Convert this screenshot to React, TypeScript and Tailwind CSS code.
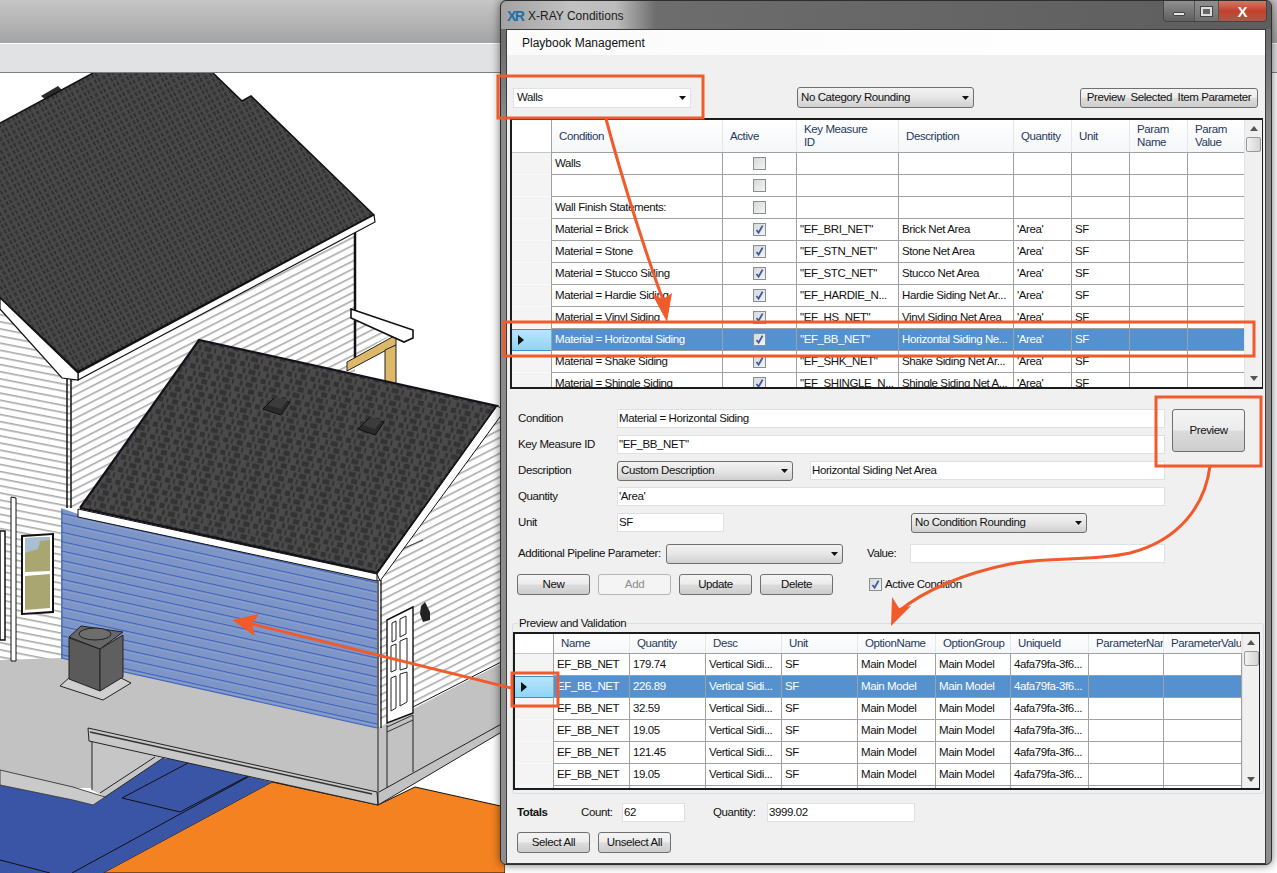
const FONT = "font-['Liberation_Sans',Arial,sans-serif]";

const conditionCols = [171, 74, 102, 115, 58, 58, 58, 57];
const previewCols = [76, 76, 76, 76, 78, 75, 78, 75, 78];

const conditionRows = [
  ["Walls", "off", "", "", "", ""],
  ["", "off", "", "", "", ""],
  ["Wall Finish Statements:", "off", "", "", "", ""],
  ["Material = Brick", "on", '"EF_BRI_NET"', "Brick Net Area", "'Area'", "SF"],
  ["Material = Stone", "on", '"EF_STN_NET"', "Stone Net Area", "'Area'", "SF"],
  ["Material = Stucco Siding", "on", '"EF_STC_NET"', "Stucco Net Area", "'Area'", "SF"],
  ["Material = Hardie Siding", "on", '"EF_HARDIE_N...', "Hardie Siding Net Ar...", "'Area'", "SF"],
  ["Material = Vinyl Siding", "on", '"EF_HS_NET"', "Vinyl Siding Net Area", "'Area'", "SF"],
  ["Material = Horizontal Siding", "on", '"EF_BB_NET"', "Horizontal Siding Ne...", "'Area'", "SF"],
  ["Material = Shake Siding", "on", '"EF_SHK_NET"', "Shake Siding Net Ar...", "'Area'", "SF"],
  ["Material = Shingle Siding", "on", '"EF_SHINGLE_N...', "Shingle Siding Net A...", "'Area'", "SF"],
];

const previewQty = ["179.74", "226.89", "32.59", "19.05", "121.45", "19.05", ""];

function Check({ on }: { on: boolean }) {
  return (
    <span className="flex h-[13px] w-[13px] items-center justify-center border border-[#8a8f94] bg-gradient-to-br from-[#d8d8d8] to-[#f4f4f4]">
      {on && (
        <svg width="11" height="11" viewBox="0 0 11 11">
          <path d="M2.5 6 L4.6 8.6 L8.6 1.6" fill="none" stroke="#3a5ca8" strokeWidth="1.9" />
        </svg>
      )}
    </span>
  );
}

function Caret() {
  return (
    <svg width="7" height="4" viewBox="0 0 7 4" className="shrink-0">
      <path d="M0 0 H7 L3.5 4 Z" fill="#111" />
    </svg>
  );
}

function Combo({ text, className, plain }: { text: string; className: string; plain?: boolean }) {
  return (
    <div
      className={`flex shrink-0 items-center justify-between pl-[3px] pr-[4px] ${className} ${
        plain
          ? "border border-[#dfe3e8] bg-white"
          : "rounded-[3px] border border-[#6f6f6f] bg-gradient-to-b from-[#f3f3f3] via-[#e6e6e6] to-[#cfcfcf]"
      }`}
    >
      <span>{text}</span>
      <Caret />
    </div>
  );
}

function Field({ text, className }: { text: string; className: string }) {
  return (
    <div className={`flex shrink-0 items-center border border-[#dde1e6] bg-white pl-[1px] ${className}`}>
      {text}
    </div>
  );
}

function Btn({ text, className, disabled }: { text: string; className: string; disabled?: boolean }) {
  return (
    <div
      className={`flex shrink-0 items-center justify-center rounded-[3px] border ${className} ${
        disabled
          ? "border-[#b5b5b5] bg-[#f4f4f4] text-[#8d8d8d]"
          : "border-[#6f6f6f] bg-[linear-gradient(180deg,#f4f4f4_0%,#ececec_48%,#dcdcdc_52%,#cdcdcd_100%)]"
      }`}
    >
      {text}
    </div>
  );
}

function Scrollbar({ width }: { width: string }) {
  return (
    <div className={`flex shrink-0 flex-col items-center border-l border-[#e3e3e3] bg-[#f0f0f0] ${width}`}>
      <svg width="8" height="5" viewBox="0 0 8 5" className="mt-[6px]">
        <path d="M0 5 H8 L4 0 Z" fill="#555" />
      </svg>
      <div className="mt-[6px] h-[15px] w-[15px] rounded-[2px] border border-[#9a9a9a] bg-gradient-to-r from-[#f2f2f2] to-[#d4d4d4]" />
      <svg width="8" height="5" viewBox="0 0 8 5" className="mb-[6px] mt-auto">
        <path d="M0 0 H8 L4 5 Z" fill="#555" />
      </svg>
    </div>
  );
}

function RowHead({ selected }: { selected: boolean }) {
  return (
    <div
      className={`flex h-[22px] shrink-0 items-center pl-[6px] ${
        selected
          ? "border-y border-[#3b93bd] bg-gradient-to-b from-[#b8e6fb] to-[#8fd4f6]"
          : "border-b border-[#fafafa] bg-[#f4f4f4]"
      }`}
    >
      {selected && (
        <svg width="6" height="10" viewBox="0 0 6 10">
          <path d="M0 0 L6 5 L0 10 Z" fill="#111" />
        </svg>
      )}
    </div>
  );
}

function ConditionGrid() {
  return (
    <div className="ml-[3px] mt-[10px] flex h-[271px] w-[753px] border-2 border-[#1c1c1c] border-r-[1px] bg-white">
      <div className="w-[40px] shrink-0 overflow-hidden border-r border-[#a0a0a0]">
        <div className="h-[33px] border-b border-[#c8c8c8]" />
        {conditionRows.map((r, i) => (
          <RowHead key={i} selected={i === 8} />
        ))}
      </div>
      <div className="min-w-0 flex-1 overflow-hidden">
        <div className="flex h-[33px] border-b border-[#a0a0a0] bg-gradient-to-b from-white to-[#f4f6f8] leading-[13px] text-[#1e395b]">
          {["Condition", "Active", "Key Measure\nID", "Description", "Quantity", "Unit", "Param\nName", "Param\nValue"].map(
            (h, i) => (
              <div
                key={h}
                style={{ width: conditionCols[i] }}
                className="flex shrink-0 items-center whitespace-pre-line border-r border-[#e4e7eb] pl-[7px]"
              >
                {h}
              </div>
            )
          )}
        </div>
        {conditionRows.map((r, i) => {
          const sel = i === 8;
          return (
            <div
              key={i}
              className={`flex h-[22px] border-b border-[#a0a0a0] ${sel ? "bg-[#5591cf] text-white" : ""}`}
            >
              <div style={{ width: conditionCols[0] }} className="flex shrink-0 items-center whitespace-nowrap border-r border-[#a0a0a0] pl-[3px]">
                {r[0]}
              </div>
              <div style={{ width: conditionCols[1] }} className="flex shrink-0 items-center justify-center border-r border-[#a0a0a0]">
                <Check on={r[1] === "on"} />
              </div>
              {[2, 3, 4, 5, 6, 7].map((c) => (
                <div
                  key={c}
                  style={{ width: conditionCols[c] }}
                  className="flex shrink-0 items-center overflow-hidden whitespace-nowrap border-r border-[#a0a0a0] pl-[3px]"
                >
                  {r[c] ?? ""}
                </div>
              ))}
            </div>
          );
        })}
      </div>
      <Scrollbar width="w-[18px]" />
    </div>
  );
}

function PreviewGrid() {
  return (
    <div className="flex h-[158px] w-[747px] border-2 border-[#1c1c1c] border-r-[1px] bg-white">
      <div className="w-[39px] shrink-0 overflow-hidden border-r border-[#a0a0a0]">
        <div className="h-[20px] border-b border-[#c8c8c8]" />
        {previewQty.map((q, i) => (
          <RowHead key={i} selected={i === 1} />
        ))}
      </div>
      <div className="min-w-0 flex-1 overflow-hidden">
        <div className="flex h-[20px] border-b border-[#a0a0a0] bg-gradient-to-b from-white to-[#f4f6f8] text-[#1e395b]">
          {["Name", "Quantity", "Desc", "Unit", "OptionName", "OptionGroup", "UniqueId", "ParameterName", "ParameterValue"].map(
            (h, i) => (
              <div
                key={h}
                style={{ width: previewCols[i] }}
                className="flex shrink-0 items-center overflow-hidden whitespace-nowrap border-r border-[#e4e7eb] pl-[7px]"
              >
                {h}
              </div>
            )
          )}
        </div>
        {previewQty.map((q, i) => {
          const full = q !== "";
          const cells = full
            ? ["EF_BB_NET", q, "Vertical Sidi...", "SF", "Main Model", "Main Model", "4afa79fa-3f6...", "", ""]
            : ["", "", "", "", "", "", "", "", ""];
          return (
            <div
              key={i}
              className={`flex h-[22px] border-b border-[#a0a0a0] ${i === 1 ? "bg-[#5591cf] text-white" : ""}`}
            >
              {cells.map((c, j) => (
                <div
                  key={j}
                  style={{ width: previewCols[j] }}
                  className="flex shrink-0 items-center overflow-hidden whitespace-nowrap border-r border-[#a0a0a0] pl-[3px]"
                >
                  {c}
                </div>
              ))}
            </div>
          );
        })}
      </div>
      <Scrollbar width="w-[17px]" />
    </div>
  );
}

function ConditionsWindow() {
  return (
    <div className={`absolute left-[500px] top-0 flex h-[865px] w-[772px] flex-col rounded-[6px] border border-[#2e2e2e] bg-[linear-gradient(180deg,#6a6a6a_0px,#6e6e6e_40px,#8a8a8a_120px,#8d8d8d_100%)] text-[#111] shadow-[0_0_10px_rgba(0,0,0,0.55)] ${FONT}`}>
      <div className="flex h-[28px] shrink-0 rounded-t-[6px] bg-[linear-gradient(90deg,#a2a2a2_0px,#c2c2c2_70px,#bcbcbc_115px,#6d6d6d_155px,#5d5d5d_100%)]">
        <div className="flex items-center pl-[6px] pt-[2px]">
          <span className="w-[21px] text-[14px] font-bold tracking-[-1.5px] text-[#1f6fa6]">XR</span>
          <span className="text-[12px] text-[#1b1b1b]">X-RAY Conditions</span>
        </div>
        <div className="ml-auto mr-[4px] flex h-[21px] overflow-hidden rounded-b-[4px] border border-t-0 border-[#444]">
          <div className="flex w-[30px] items-end justify-center bg-gradient-to-b from-[#8f8f8f] to-[#5f5f5f] pb-[5px]">
            <div className="h-[4px] w-[12px] rounded-[1px] border border-[#444] bg-[#e8e8e8]" />
          </div>
          <div className="flex w-[25px] items-center justify-center border-x border-[#555] bg-gradient-to-b from-[#8f8f8f] to-[#6f6f6f]">
            <div className="h-[9px] w-[11px] border-2 border-[#ddd] bg-[#666] outline outline-1 outline-[#444]" />
          </div>
          <div className="flex w-[47px] items-center justify-center bg-gradient-to-b from-[#d07868] via-[#c3402a] to-[#a8584a] text-[15px] font-bold leading-none text-white">
            X
          </div>
        </div>
      </div>

      <div className="mx-[5px] flex flex-1 flex-col border border-[#3a3a3a] bg-[#f0f0f0] text-[11.5px] tracking-[-0.4px]">
        <div className="flex h-[25px] shrink-0 items-center bg-gradient-to-r from-[#fbfbfb] to-white pl-[15px] text-[12px] tracking-normal">
          Playbook Management
        </div>

        <div className="mt-[32px] flex h-[21px] shrink-0 items-center pl-[6px]">
          <Combo plain text="Walls" className="h-[20px] w-[178px]" />
          <Combo text="No Category Rounding" className="ml-[106px] h-[21px] w-[177px]" />
          <Btn text="Preview  Selected  Item Parameter" className="ml-[106px] h-[20px] w-[178px] whitespace-pre" />
        </div>

        <ConditionGrid />

        <div className="mt-[20px] flex pl-[11px]">
          <div className="flex w-[647px] shrink-0 flex-col">
            <div className="flex h-[19px] items-center">
              <span className="w-[99px]">Condition</span>
              <Field text="Material = Horizontal Siding" className="h-[19px] w-[548px]" />
            </div>
            <div className="mt-[7px] flex h-[19px] items-center">
              <span className="w-[99px]">Key Measure ID</span>
              <Field text={'"EF_BB_NET"'} className="h-[19px] w-[548px]" />
            </div>
            <div className="mt-[7px] flex h-[19px] items-center">
              <span className="w-[99px]">Description</span>
              <Combo text="Custom Description" className="h-[20px] w-[176px]" />
              <Field text="Horizontal Siding Net Area" className="ml-[17px] h-[19px] w-[355px]" />
            </div>
            <div className="mt-[7px] flex h-[19px] items-center">
              <span className="w-[99px]">Quantity</span>
              <Field text="'Area'" className="h-[19px] w-[548px]" />
            </div>
            <div className="mt-[7px] flex h-[19px] items-center">
              <span className="w-[99px]">Unit</span>
              <Field text="SF" className="h-[19px] w-[107px]" />
              <Combo text="No Condition Rounding" className="ml-[187px] h-[20px] w-[176px]" />
            </div>
            <div className="mt-[12px] flex h-[19px] items-center">
              <span className="w-[148px] whitespace-nowrap">Additional Pipeline Parameter:</span>
              <Combo text="" className="h-[20px] w-[177px]" />
              <span className="ml-[24px] w-[43px]">Value:</span>
              <Field text="" className="h-[19px] w-[255px]" />
            </div>
            <div className="-ml-[1px] mt-[11px] flex h-[21px] items-center">
              <Btn text="New" className="h-[21px] w-[73px]" />
              <Btn text="Add" disabled className="ml-[8px] h-[21px] w-[73px]" />
              <Btn text="Update" className="ml-[8px] h-[21px] w-[73px]" />
              <Btn text="Delete" className="ml-[8px] h-[21px] w-[73px]" />
              <span className="ml-[36px] flex items-center gap-[3px]">
                <Check on />
                Active Condition
              </span>
            </div>
          </div>
          <Btn text="Preview" className="ml-[7px] h-[43px] w-[73px]" />
        </div>

        <div className="relative ml-[5px] mt-[28px] h-[171px] w-[752px] shrink-0 rounded-[3px] border border-[#d5dfe5] pt-[8px]">
          <span className="absolute left-[5px] top-[-7px] bg-[#f0f0f0] px-[1px] leading-[13px]">
            Preview and Validation
          </span>
          <PreviewGrid />
        </div>

        <div className="mt-[9px] flex h-[19px] shrink-0 items-center pl-[10px]">
          <span className="w-[64px] font-bold">Totals</span>
          <span className="w-[41px]">Count:</span>
          <Field text="62" className="h-[19px] w-[63px]" />
          <span className="ml-[28px] w-[54px]">Quantity:</span>
          <Field text="3999.02" className="h-[19px] w-[148px]" />
        </div>
        <div className="mt-[10px] flex h-[21px] shrink-0 gap-[8px] pl-[10px]">
          <Btn text="Select All" className="h-[21px] w-[73px]" />
          <Btn text="Unselect All" className="h-[21px] w-[73px]" />
        </div>
      </div>
    </div>
  );
}

function House() {
  return (
    <svg viewBox="0 73 505 800" className="block h-[800px] w-[505px]">
      <defs>
        <pattern id="roofA" width="15" height="6" patternUnits="userSpaceOnUse" patternTransform="rotate(-28)">
          <rect width="15" height="6" fill="#484848" />
          <rect x="0" y="1" width="2" height="4" fill="#303030" />
          <rect x="4" y="1" width="2" height="4" fill="#303030" />
          <rect x="9" y="1" width="3" height="4" fill="#353535" />
        </pattern>
        <pattern id="roofB" width="24" height="13" patternUnits="userSpaceOnUse" patternTransform="rotate(12.5)">
          <rect width="24" height="13" fill="#4a4a4a" />
          <rect x="1" y="1" width="5" height="5" fill="#333333" />
          <rect x="9" y="1" width="2" height="5" fill="#333333" />
          <rect x="15" y="1" width="6" height="5" fill="#333333" />
          <rect x="5" y="7.5" width="3" height="5" fill="#333333" />
          <rect x="11" y="7.5" width="7" height="5" fill="#333333" />
          <rect x="21" y="7.5" width="2" height="5" fill="#333333" />
        </pattern>
        <pattern id="sidingR" width="20" height="7" patternUnits="userSpaceOnUse" patternTransform="rotate(-27)">
          <rect width="20" height="7" fill="#ffffff" />
          <rect width="20" height="1.6" fill="#a9a9a9" />
        </pattern>
        <pattern id="sidingL" width="20" height="7" patternUnits="userSpaceOnUse" patternTransform="rotate(11)">
          <rect width="20" height="7" fill="#ffffff" />
          <rect width="20" height="1.6" fill="#a9a9a9" />
        </pattern>
        <pattern id="sidingBlue" width="20" height="9.2" patternUnits="userSpaceOnUse" patternTransform="rotate(12.4)">
          <rect width="20" height="9.2" fill="#7e95c7" />
          <rect y="0" width="20" height="1.4" fill="#3f63bd" />
          <rect y="1.4" width="20" height="1.4" fill="#8ea2cc" />
        </pattern>
      </defs>

      <rect x="0" y="73" width="505" height="800" fill="#ffffff" />

      {/* ground */}
      <polygon points="415,787 505,742 505,807" fill="#ffffff" />
      <polygon points="272,782 378,805 415,787 505,807 505,873 103,873" fill="#f58220" stroke="#111" strokeWidth="1" />
      <polygon points="0,785 73,800 93,805 105,797 163,758 177,760 272,782 103,873 0,873" fill="#3a55a5" />
      <path d="M122,798 L188,763 M122,798 L180,812 L250,775 M72,873 L248,777 M0,860 L50,873" fill="none" stroke="#111" strokeWidth="1" />

      {/* slab */}
      <polygon points="0,658 61,658 378,728 505,660 505,730 378,805 92,741 92,788 73,788 0,770" fill="#c2c2c2" />
      <polygon points="92,741 163,758 105,797 92,790" fill="#c6c6c6" />
      <polygon points="0,770 73,787 105,797 93,805 73,800 0,785" fill="#cacaca" stroke="#222" strokeWidth="0.8" />
      <path d="M92,741 V790 M105,797 L163,758 M100,793 L155,757" fill="none" stroke="#222" strokeWidth="1" />
      <polygon points="88,728 377,792 378,805 89,741" fill="#c8c8c8" stroke="#222" strokeWidth="1" />
      <path d="M90,732 L372,794" stroke="#333" strokeWidth="1.5" />
      <path d="M378,728 V805 M387,725 V788 M413,715 V772 M378,805 L505,730 M379,792 L505,722" fill="none" stroke="#222" strokeWidth="1" />

      {/* upper walls */}
      <polygon points="0,300 70,378 70,510 0,495" fill="url(#sidingL)" />
      <polygon points="70,378 355,232 355,420 70,510" fill="url(#sidingR)" />
      <polygon points="355,318 395,333 356,356" fill="url(#sidingR)" />
      <path d="M355,232 V360" stroke="#111" strokeWidth="2.5" />
      <path d="M67,378 V508 M71,378 V508" stroke="#111" strokeWidth="1.5" />
      <polygon points="0,495 67,510 61,510 61,658 0,660" fill="url(#sidingL)" />
      <polygon points="11,497 16,498 16,661 11,661" fill="#ffffff" stroke="#111" strokeWidth="1" />

      {/* porch */}
      <polygon points="347,362 396,335 396,345 347,371" fill="#dcb868" stroke="#222" strokeWidth="1" />
      <polygon points="385,350 396,345 396,385 385,385" fill="#dcb868" stroke="#222" strokeWidth="1" />
      <polygon points="351,309 413,330 413,338 404,342 351,318" fill="#ffffff" stroke="#111" strokeWidth="1.6" />

      {/* windows */}
      <polygon points="21,535 54,533 54,613 21,615" fill="#111" />
      <polygon points="23,537 52,535 52,611 23,613" fill="#ffffff" />
      <polygon points="25,538 50,537 50,571 25,572" fill="#a9a672" />
      <polygon points="25,538 50,537 50,540 40,541 38,549 25,553" fill="#a8bfd2" />
      <polygon points="25,576 50,574 50,608 25,610" fill="#a9a672" />
      <polygon points="0,531 5,531 5,640 0,640" fill="#ffffff" stroke="#111" strokeWidth="1.5" />

      {/* blue wall */}
      <polygon points="61,508 78,514 377,581 377,728 61,658" fill="url(#sidingBlue)" />
      <path d="M61,658 L377,728" stroke="#3f63bd" strokeWidth="1.2" />
      <path d="M62,510 V658" stroke="#4468c0" strokeWidth="1.2" />

      {/* gable wall */}
      <polygon points="380,582 505,408 505,662 380,725" fill="url(#sidingR)" />
      <path d="M378,580 V728 M381,580 V728" stroke="#111" strokeWidth="1.3" />
      <path d="M413,707 L505,660" stroke="#111" strokeWidth="1" />
      <path d="M395,552 L423,540" stroke="#222" strokeWidth="0.8" />

      {/* door */}
      <polygon points="387,620 413,607 413,713 387,723" fill="#ffffff" stroke="#111" strokeWidth="1.4" />
      <path d="M392,623 L396,621 V640 L392,642 Z M400,619 L406,616 V634 L400,637 Z M391,646 L396,644 V670 L391,672 Z M400,641 L407,638 V668 L400,670 Z M391,678 L396,676 V708 L391,711 Z M400,674 L407,672 V702 L400,706 Z" fill="none" stroke="#222" strokeWidth="1" />
      <path d="M387,727 L413,715 M387,732 L413,720" stroke="#333" strokeWidth="1" />
      <path d="M421,606 L425,602 L430,612 V620 L423,622 L420,614 Z" fill="#222" />

      {/* ac unit */}
      <polygon points="60,686 103,700 131,683 121,678 80,668" fill="#cfcfcf" stroke="#222" strokeWidth="1" />
      <polygon points="69,638 100,649 100,691 69,679" fill="#5a5a5a" stroke="#222" strokeWidth="1" />
      <polygon points="100,649 123,635 123,677 100,691" fill="#5f5f5f" stroke="#222" strokeWidth="1" />
      <polygon points="69,637 81,626 123,632 100,649" fill="#676767" stroke="#222" strokeWidth="1" />
      <ellipse cx="95" cy="634" rx="16" ry="6" fill="#6d6d6d" stroke="#222" strokeWidth="1" />

      {/* main roof */}
      <polygon points="0,123 93,73 213,73 242,101 251,96 374,215 78,372 0,298" fill="url(#roofA)" />
      <polygon points="41,96 58,86 62,90 46,100" fill="#2a2a2a" />
      <path d="M0,123 L93,73 M213,73 L242,101 L251,96 L374,215" fill="none" stroke="#111" strokeWidth="1.5" />
      <path d="M374,215 L78,372 L0,298" fill="none" stroke="#111" strokeWidth="2.4" />
      <polygon points="374,215 375,222 78,380 78,373" fill="#ffffff" stroke="#111" strokeWidth="1.2" />
      <polygon points="0,298 78,373 78,380 62,378 0,309" fill="#ffffff" stroke="#111" strokeWidth="1.2" />

      {/* lower roof */}
      <polygon points="199,340 497,406 377,573 80,508" fill="url(#roofB)" />
      <path d="M80,508 L199,340 L497,406 L377,573 L80,508" fill="none" stroke="#15101a" strokeWidth="2.2" />
      <polygon points="78,509 377,574 377,581 78,517" fill="#ffffff" stroke="#111" strokeWidth="1" />
      <polygon points="377,574 497,406 505,410 380,581" fill="#ffffff" stroke="#111" strokeWidth="1" />
      <polygon points="263,409 274,398 290,402 281,415" fill="#2a2a2a" stroke="#111" strokeWidth="1" />
      <polygon points="268,405 276,397 288,400 281,409" fill="#3c3c3c" />
      <polygon points="358,429 369,418 384,422 375,435" fill="#2a2a2a" stroke="#111" strokeWidth="1" />
      <polygon points="363,425 371,417 382,420 375,429" fill="#3c3c3c" />
    </svg>
  );
}

function Annotations() {
  return (
    <svg viewBox="0 0 1277 873" className="pointer-events-none absolute left-0 top-0 h-[873px] w-[1277px]">
      <g fill="none" stroke="#f15a2b" strokeWidth="3">
        <path d="M606,119 C625,190 650,265 663,300" />
        <path d="M1210,466 C1205,505 1180,540 1130,553 C1090,562 1050,556 1010,564 C965,573 925,590 899,611" />
        <path d="M252,624 L511,688" />
      </g>
      <g fill="#f15a2b">
        <polygon points="667,322 652,294 663,299 672,293" />
        <polygon points="891,626 892,597 899,608 911,606" />
        <polygon points="232,620 259,614 252,624 255,636" />
      </g>
      <g fill="none" stroke="#f15a2b" strokeWidth="3">
        <rect x="498" y="76" width="205" height="42" />
        <rect x="504" y="322" width="750" height="34" />
        <rect x="1156" y="397" width="105" height="69" />
        <rect x="512" y="673" width="46" height="33" />
      </g>
    </svg>
  );
}

export default function App() {
  return (
    <div className="relative h-[873px] w-[1277px] overflow-hidden bg-white">
      <div className="h-[43px] bg-gradient-to-b from-[#c6c6c6] to-[#a4a4a4]" />
      <div className="h-[30px] border-y border-t-[#ffffff] border-b-[#7f7f7f] bg-[#e1e2e4]" />
      <House />
      <ConditionsWindow />
      <Annotations />
    </div>
  );
}
